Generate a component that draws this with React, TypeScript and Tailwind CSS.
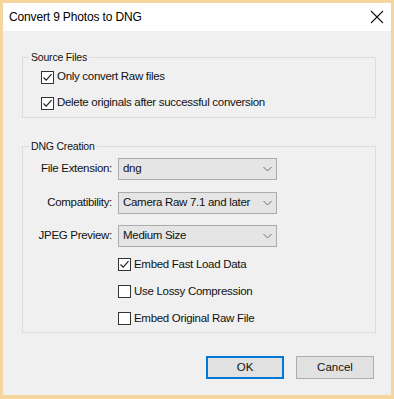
import React from 'react';

const font = { fontFamily: '"Liberation Sans", Arial, sans-serif' };

function Check({ checked }: { checked?: boolean }) {
  return (
    <span className="w-[13px] h-[13px] border border-[#333333] bg-white flex items-center justify-center shrink-0">
      {checked && (
        <svg width="11" height="11" viewBox="0 0 11 11">
          <path d="M1.5 5.5 L4.2 8.2 L9.5 2.2" fill="none" stroke="#222" strokeWidth="1.2" />
        </svg>
      )}
    </span>
  );
}

function CheckRow({ label, checked, className = '' }: { label: string; checked?: boolean; className?: string }) {
  return (
    <div className={`flex items-center ${className}`}>
      <Check checked={checked} />
      <span className="ml-[3px] text-[11.5px] tracking-[-0.3px] text-[#111] leading-none whitespace-nowrap">{label}</span>
    </div>
  );
}

function Select({ label, value, className = '' }: { label: string; value: string; className?: string }) {
  return (
    <div className={`flex items-center h-[22px] ${className}`}>
      <span className="w-[89px] text-right text-[11.5px] tracking-[-0.3px] text-[#111] whitespace-nowrap">{label}</span>
      <div className="ml-[6px] w-[159px] h-[22px] bg-[#e5e5e5] border border-[#acacac] flex items-center pl-[4px] pr-[4px]">
        <span className="flex-1 text-[11.5px] tracking-[-0.3px] text-[#111] whitespace-nowrap">{value}</span>
        <svg width="9" height="6" viewBox="0 0 9 6">
          <path d="M0.5 1 L4.5 5 L8.5 1" fill="none" stroke="#707070" strokeWidth="1" />
        </svg>
      </div>
    </div>
  );
}

export default function App() {
  return (
    <div
      style={font}
      className="w-[394px] h-[399px] flex flex-col border-t-[3px] border-l-[3px] border-r-[3px] border-b-[4px] border-[#f5d79d] bg-[#f0f0f0] overflow-hidden"
    >
      {/* Title bar */}
      <div className="h-[28px] bg-white flex items-center pl-[6px] pr-[7px] shrink-0">
        <span className="flex-1 text-[12px] tracking-[-0.15px] text-black">Convert 9 Photos to DNG</span>
        <svg width="14" height="14" viewBox="0 0 14 14">
          <path d="M1 1 L13 13 M13 1 L1 13" stroke="#111" strokeWidth="1.1" />
        </svg>
      </div>

      <div className="flex-1 flex flex-col">
        {/* Source Files */}
        <fieldset className="mt-[20px] ml-[19px] w-[354px] border border-[#dcdcdc] pb-[1px]">
          <legend className="ml-[6px] px-[2px] text-[10.5px] tracking-[-0.2px] leading-[13px] text-[#111]">Source Files</legend>
          <div className="pl-[18px]">
            <CheckRow label="Only convert Raw files" checked className="h-[26px]" />
            <CheckRow label="Delete originals after successful conversion" checked className="h-[26px]" />
          </div>
        </fieldset>

        {/* DNG Creation */}
        <fieldset className="mt-[22px] ml-[19px] w-[354px] border border-[#dcdcdc]">
          <legend className="ml-[6px] px-[2px] text-[10.5px] tracking-[-0.2px] leading-[13px] text-[#111]">DNG Creation</legend>
          <Select label="File Extension:" value="dng" className="mt-[5px]" />
          <Select label="Compatibility:" value="Camera Raw 7.1 and later" className="mt-[12px]" />
          <Select label="JPEG Preview:" value="Medium Size" className="mt-[11px]" />
          <div className="mt-[4px] pl-[95px]">
            <CheckRow label="Embed Fast Load Data" checked className="h-[27px]" />
            <CheckRow label="Use Lossy Compression" className="h-[27px]" />
            <CheckRow label="Embed Original Raw File" className="h-[27px]" />
          </div>
        </fieldset>

        {/* Buttons */}
        <div className="mt-[23px] flex justify-end gap-[12px] pr-[17px]">
          <button className="w-[78px] h-[23px] bg-[#e1e1e1] border-2 border-[#0078d7] text-[11.5px] text-[#111]">OK</button>
          <button className="w-[78px] h-[23px] bg-[#e1e1e1] border border-[#adadad] text-[11.5px] text-[#111]">Cancel</button>
        </div>
      </div>
    </div>
  );
}
